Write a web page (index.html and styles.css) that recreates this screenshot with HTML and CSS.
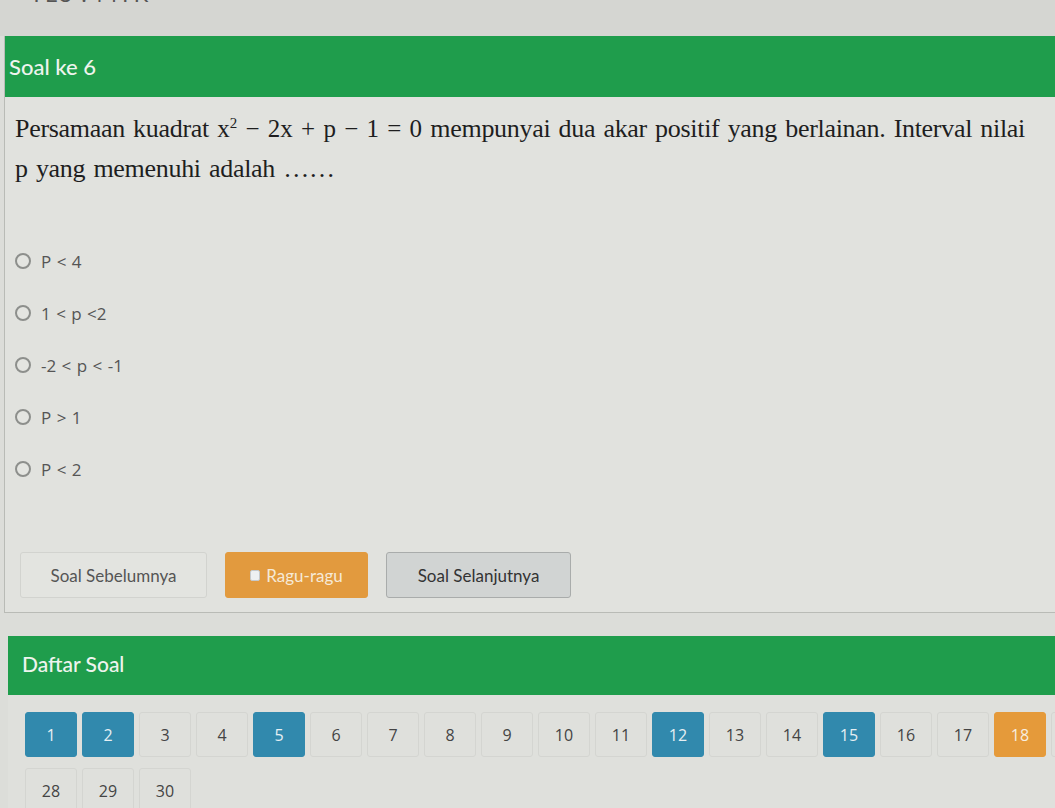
FILE: index.html
```html
<!DOCTYPE html>
<html lang="id">
<head>
<meta charset="utf-8">
<title>Soal ke 6</title>
<link rel="stylesheet" href="styles.css">
</head>
<body>
<div class="page">
  <div class="topbar"><span class="toptitle">TES : MTK</span></div>

  <section class="card question-card">
    <div class="card-head">Soal ke 6</div>
    <div class="card-body">
      <p class="question">Persamaan kuadrat <span class="math">x<sup>2</sup> &minus; 2x + p &minus; 1 = 0</span> mempunyai dua akar positif yang berlainan. Interval nilai p yang memenuhi adalah &hellip;&hellip;</p>

      <ul class="options">
        <li class="option"><span class="radio"></span><span>P &lt; 4</span></li>
        <li class="option"><span class="radio"></span><span>1 &lt; p &lt;2</span></li>
        <li class="option"><span class="radio"></span><span>-2 &lt; p &lt; -1</span></li>
        <li class="option"><span class="radio"></span><span>P &gt; 1</span></li>
        <li class="option"><span class="radio"></span><span>P &lt; 2</span></li>
      </ul>

      <div class="actions">
        <button class="btn btn-prev">Soal Sebelumnya</button>
        <button class="btn btn-ragu"><span class="check"></span>Ragu-ragu</button>
        <button class="btn btn-next">Soal Selanjutnya</button>
      </div>
    </div>
  </section>

  <section class="card list-card">
    <div class="card-head list-head">Daftar Soal</div>
    <div class="card-body list-body">
      <div class="grid">
        <span class="num done">1</span>
        <span class="num done">2</span>
        <span class="num">3</span>
        <span class="num">4</span>
        <span class="num done">5</span>
        <span class="num">6</span>
        <span class="num">7</span>
        <span class="num">8</span>
        <span class="num">9</span>
        <span class="num">10</span>
        <span class="num">11</span>
        <span class="num done">12</span>
        <span class="num">13</span>
        <span class="num">14</span>
        <span class="num done">15</span>
        <span class="num">16</span>
        <span class="num">17</span>
        <span class="num ragu">18</span>
        <span class="num">19</span>
        <span class="num">20</span>
        <span class="num">21</span>
        <span class="num">22</span>
        <span class="num">23</span>
        <span class="num">24</span>
        <span class="num">25</span>
        <span class="num">26</span>
        <span class="num">27</span>
        <span class="num">28</span>
        <span class="num">29</span>
        <span class="num">30</span>
      </div>
    </div>
  </section>
</div>
</body>
</html>
```

FILE: styles.css
```css
html, body {
  margin: 0;
  padding: 0;
  background: #dcddd9;
  overflow: hidden;
  height: 808px;
}

.page {
  width: 1600px;
  font-family: Lato, "Open Sans", "Liberation Sans", sans-serif;
  color: #444;
}

.topbar {
  height: 36px;
  background: #d5d6d2;
  padding-left: 30px;
  overflow: hidden;
}

.toptitle {
  display: block;
  margin-top: -17px;
  font-size: 22px;
  line-height: 22px;
  color: #555;
  letter-spacing: 2px;
}

.card {
  background: #e1e2de;
  border: 1px solid #b9bbb6;
  border-right: none;
}

.question-card {
  margin-left: 4px;
  border-top: none;
}

.card-head {
  background: #1f9d4c;
  color: #eef4ee;
  font-size: 22px;
  font-weight: 500;
  height: 61px;
  line-height: 61px;
  padding-left: 4px;
}

.card-body {
  padding: 12px 0 0 10px;
}

.question {
  margin: 0;
  width: 1025px;
  font-family: "Liberation Serif", "DejaVu Serif", serif;
  font-size: 26px;
  line-height: 40px;
  color: #1e1e1e;
  letter-spacing: -0.3px;
  word-spacing: 2px;
}

.math {
  font-family: "Liberation Serif", "DejaVu Serif", serif;
  font-size: 25px;
  letter-spacing: 0;
}

.math sup {
  font-size: 15px;
  line-height: 0;
}

.options {
  list-style: none;
  margin: 46px 0 0 0;
  padding: 0;
}

.option {
  display: flex;
  align-items: center;
  gap: 10px;
  height: 52px;
  font-family: "Open Sans", "Liberation Sans", sans-serif;
  font-size: 17px;
  color: #555;
  padding-left: 0;
  word-spacing: 1px;
}

.radio {
  width: 12px;
  height: 12px;
  border: 2px solid #8d8f8c;
  border-radius: 50%;
  background: #e4e5e1;
}

.actions {
  display: flex;
  gap: 18px;
  margin-top: 57px;
  padding: 0 0 14px 5px;
}

.btn {
  font-family: Lato, "Open Sans", "Liberation Sans", sans-serif;
  font-size: 17px;
  height: 46px;
  border-radius: 3px;
  border: 1px solid #d2d3cf;
  padding: 0 10px;
  display: inline-flex;
  align-items: center;
  gap: 6px;
  cursor: pointer;
}

.btn-prev {
  width: 187px;
  justify-content: center;
  background: #e3e4e0;
  color: #555;
}

.btn-ragu {
  width: 143px;
  justify-content: center;
  background: #e29a3e;
  border-color: #e29a3e;
  color: #f6e9d6;
}

.check {
  width: 8px;
  height: 9px;
  background: #eef0f2;
  border: 1px solid #c6c9cc;
  border-radius: 2px;
}

.btn-next {
  width: 185px;
  justify-content: center;
  background: #d1d4d3;
  border-color: #a9acab;
  color: #333;
}

.list-card {
  margin: 23px 0 0 8px;
  border: none;
}

.list-head {
  height: 59px;
  line-height: 56px;
  padding-left: 14px;
  font-size: 21px;
}

.list-body {
  padding: 17px 0 0 17px;
  background: #dfe0dc;
}

.grid {
  display: flex;
  flex-wrap: wrap;
  width: 1540px;
  column-gap: 5px;
  row-gap: 11px;
}

.num {
  width: 52px;
  height: 45px;
  display: flex;
  align-items: center;
  justify-content: center;
  border: 1px solid #d4d5d1;
  border-radius: 3px;
  box-sizing: border-box;
  font-family: "Open Sans", "Liberation Sans", sans-serif;
  font-size: 16px;
  color: #444;
}

.num.done {
  background: #3189ad;
  border-color: #3189ad;
  color: #e6eff3;
}

.num.ragu {
  background: #e59a3a;
  border-color: #e59a3a;
  color: #f7eee0;
}
```
